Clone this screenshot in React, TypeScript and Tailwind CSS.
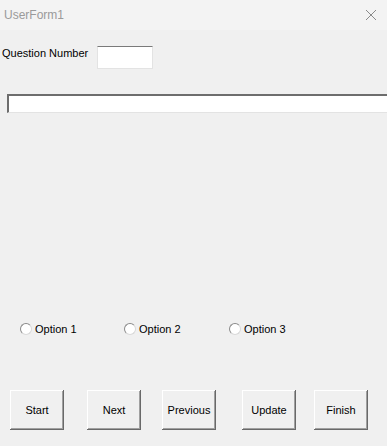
export default function App() {
    const buttons = [
        { label: "Start", ml: "ml-[10px]" },
        { label: "Next", ml: "ml-[23px]" },
        { label: "Previous", ml: "ml-[21px]" },
        { label: "Update", ml: "ml-[26px]" },
        { label: "Finish", ml: "ml-[18px]" },
    ]

    return (
        <div className="w-[387px] h-[446px] bg-[#f0f0f0] overflow-hidden flex flex-col text-black" style={{ fontFamily: '"Liberation Sans", Arial, sans-serif' }}>
            {/* Title bar */}
            <div className="h-[30px] bg-[#f3f3f3] flex items-center justify-between pl-[4px] pr-[6px]">
                <span className="text-[12px] text-[#9a9a9a]">UserForm1</span>
                <svg width="12" height="12" viewBox="0 0 12 12" className="mr-[4px]">
                    <path d="M1 1 L11 11 M11 1 L1 11" stroke="#8a8a8a" strokeWidth="1" />
                </svg>
            </div>

            {/* Question number */}
            <div className="flex items-start mt-[16px]">
                <span className="w-[97px] pl-[2px] mt-[1px] text-[11px] leading-[13px]">Question Number</span>
                <div className="w-[56px] h-[23px] bg-white border border-[#e3e3e3] border-t-[#7a7a7a]" />
            </div>

            {/* Question text */}
            <div className="ml-[7px] mt-[25px] w-[400px] h-[19px] bg-white border-t-2 border-l-2 border-b border-[#6d6d6d] border-b-[#e3e3e3]" />

            {/* Options */}
            <div className="flex items-center mt-[209px] h-[14px] text-[11px]">
                {["Option 1", "Option 2", "Option 3"].map((opt, i) => (
                    <div key={opt} className={`flex items-center gap-[3px] ${i === 0 ? "ml-[20px] w-[104px]" : i === 1 ? "w-[105px]" : ""}`}>
                        <span className="w-[12px] h-[12px] rounded-full bg-white border border-[#8a8a8a] border-r-[#d8d8d8] border-b-[#d8d8d8]" />
                        <span>{opt}</span>
                    </div>
                ))}
            </div>

            {/* Buttons */}
            <div className="flex mt-[54px]">
                {buttons.map((b) => (
                    <button
                        key={b.label}
                        className={`${b.ml} w-[54px] h-[40px] bg-[#f0f0f0] text-[11px] flex items-center justify-center shadow-[inset_-1px_-1px_0_#696969,inset_1px_1px_0_#ffffff,inset_-2px_-2px_0_#a0a0a0]`}
                    >
                        {b.label}
                    </button>
                ))}
            </div>
        </div>
    )
}
